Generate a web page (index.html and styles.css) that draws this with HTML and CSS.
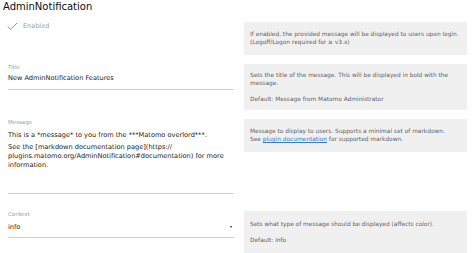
FILE: index.html
```html
<!DOCTYPE html>
<html>
<head>
<meta charset="utf-8">
<link rel="stylesheet" href="styles.css">
</head>
<body>
<div class="page">
  <h2 class="title">AdminNotification</h2>

  <div class="row">
    <div class="field">
      <div class="checkbox">
        <svg class="check" width="11" height="9" viewBox="0 0 11 9"><polyline points="0.8,4.6 3.6,7.6 10.2,0.8" fill="none" stroke="#4caf50" stroke-width="0.9"/></svg>
        <span class="check-label">Enabled</span>
      </div>
    </div>
    <div class="help">
      <p>If enabled, the provided message will be displayed to users upon login.<br>(Logoff/Logon required for ≥ v3.x)</p>
    </div>
  </div>

  <div class="row">
    <div class="field">
      <div class="label">Title</div>
      <div class="input">New AdminNotification Features</div>
    </div>
    <div class="help help-compact">
      <p>Sets the title of the message. This will be displayed in bold with the message.</p>
      <p>Default: Message from Matomo Administrator</p>
    </div>
  </div>

  <div class="row">
    <div class="field">
      <div class="label">Message</div>
      <div class="input textarea">
        <p>This is a *message* to you from the ***Matomo overlord***.</p>
        <p>See the [markdown documentation page](https://<br>plugins.matomo.org/AdminNotification#documentation) for more<br>information.</p>
      </div>
    </div>
    <div class="help">
      <p>Message to display to users. Supports a minimal set of markdown.<br>See <a href="#">plugin documentation</a> for supported markdown.</p>
    </div>
  </div>

  <div class="row row-last">
    <div class="field">
      <div class="label">Context</div>
      <div class="input select"><span>info</span><span class="caret"></span></div>
    </div>
    <div class="help help-last">
      <p>Sets what type of message should be displayed (affects color).</p>
      <p>Default: info</p>
    </div>
  </div>
</div>
</body>
</html>
```
FILE: styles.css
```css
html, body {
  margin: 0;
  padding: 0;
  background: #ffffff;
}
body {
  font-family: "DejaVu Sans", Verdana, sans-serif;
  color: #212121;
}
.page {
  width: 474px;
}
.title {
  margin: 0 0 9px 0;
  padding-left: 3px;
  font-size: 10px;
  font-weight: normal;
  line-height: 13px;
  color: #0d0d0d;
}
.row {
  display: grid;
  grid-template-columns: 226px 223px;
  column-gap: 10px;
  padding-left: 8px;
  margin-bottom: 9px;
  align-items: start;
}
.row-last {
  margin-bottom: 0;
}
.field {
  padding-bottom: 8px;
}
.checkbox {
  display: flex;
  align-items: center;
  height: 8px;
  margin-left: -1px;
}
.check {
  display: block;
}
.check-label {
  margin-left: 5px;
  font-size: 6.5px;
  line-height: 8px;
  color: #9e9e9e;
}
.label {
  font-size: 5.5px;
  line-height: 6px;
  color: #9e9e9e;
}
.input {
  font-size: 6.6px;
  line-height: 8.7px;
  color: #212121;
  padding: 4.8px 0 5.5px 0;
  border-bottom: 1px solid #d0d0d0;
}
.textarea {
  padding-top: 6.3px;
  padding-bottom: 20.5px;
}
.textarea p {
  margin: 0 0 3.3px 0;
}
.select {
  display: flex;
  justify-content: space-between;
  align-items: center;
  padding-top: 5.5px;
}
.caret {
  width: 0;
  height: 0;
  border-left: 1.8px solid transparent;
  border-right: 1.8px solid transparent;
  border-top: 2.2px solid #212121;
  margin-right: 2px;
}
.help {
  background: #f0f0f0;
  padding: 8px 6px 8px 6px;
  font-size: 5.85px;
  line-height: 8.3px;
  color: #5f5f5f;
}
.help-compact {
  padding-top: 7px;
  padding-bottom: 7px;
}
.help-last {
  padding-top: 9px;
  padding-bottom: 9px;
}
.help p {
  margin: 0 0 7.7px 0;
}
.help p:last-child {
  margin-bottom: 0;
}
.help a {
  color: #2a7ae2;
  text-decoration: underline;
}
```
